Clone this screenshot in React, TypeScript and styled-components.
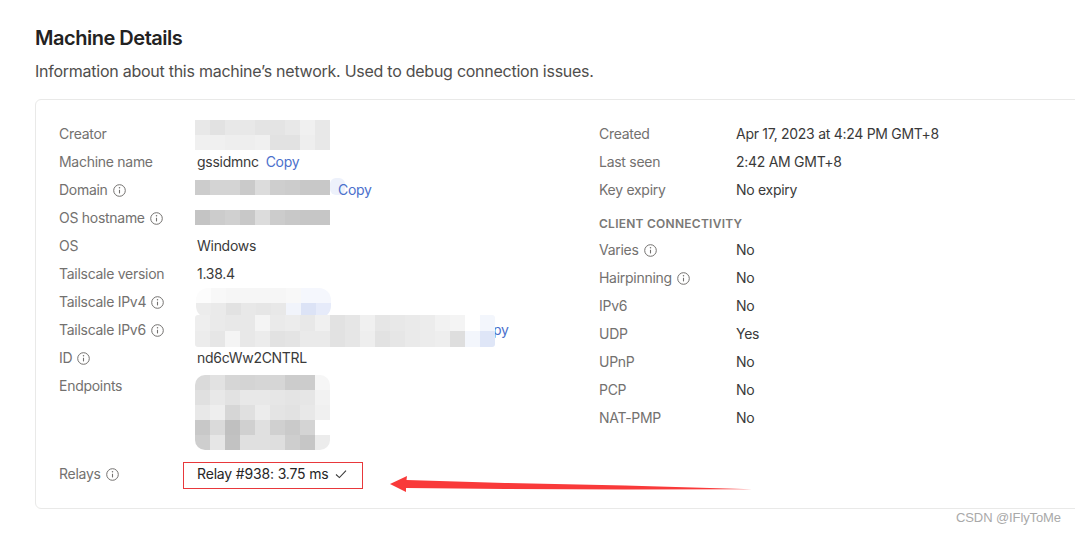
import React from 'react'
import styled, { createGlobalStyle } from 'styled-components'

const GlobalStyle = createGlobalStyle`
  html, body {
    margin: 0;
    padding: 0;
    background: #fff;
    overflow: hidden;
    height: 534px;
  }
`

const Page = styled.div`
  position: relative;
  width: 1075px;
  height: 534px;
  overflow: hidden;
  padding: 24px 0 0 35px;
  box-sizing: border-box;
  font-family: Inter, 'Liberation Sans', sans-serif;
  color: #3a3a3a;
`

const Title = styled.h2`
  margin: 0;
  font-size: 20px;
  line-height: 28px;
  font-weight: 600;
  letter-spacing: -0.024em;
  color: #232222;
`

const Description = styled.p`
  margin: 7px 0 16px;
  font-size: 16px;
  line-height: 24px;
  letter-spacing: -0.016em;
  color: #4f4e4c;
`

const Card = styled.div`
  width: 1100px;
  height: 410px;
  box-sizing: border-box;
  padding: 20px 23px;
  border: 1px solid #e9e9e8;
  border-radius: 6px;
  display: grid;
  grid-template-columns: 540px 1fr;
`

const Column = styled.div`
  display: flex;
  flex-direction: column;
`

const Row = styled.div<{ $labelWidth: number; $height?: number }>`
  display: grid;
  grid-template-columns: ${({ $labelWidth }) => $labelWidth}px 1fr;
  height: ${({ $height }) => $height ?? 28}px;
  font-size: 14px;
  line-height: 28px;
  letter-spacing: -0.02em;
`

const Label = styled.div`
  display: flex;
  align-items: center;
  gap: 5px;
  height: 28px;
  color: #73716f;
`

const Value = styled.div`
  position: relative;
  white-space: nowrap;
  color: #3a3a3a;
`

const CopyLink = styled.a<{ $offset?: number }>`
  position: relative;
  margin-left: ${({ $offset }) => $offset ?? 7}px;
  color: #4b70cc;
`

const SectionTitle = styled.div`
  height: 32px;
  padding-top: 6px;
  box-sizing: border-box;
  display: flex;
  align-items: center;
  font-size: 12px;
  font-weight: 600;
  letter-spacing: 0.25px;
  color: #7a7876;
`

const RelayBox = styled.span`
  position: absolute;
  left: -14px;
  top: 2px;
  width: 178px;
  height: 25px;
  border: 1px solid #e8383b;
  pointer-events: none;
`

const Relay = styled.span`
  display: inline-flex;
  align-items: center;
  gap: 5px;
  letter-spacing: -0.012em;
  color: #262626;
`

const MosaicSvg = styled.svg<{ $left: number; $top: number }>`
  position: absolute;
  left: ${({ $left }) => $left}px;
  top: ${({ $top }) => $top}px;
`

const ArrowSvg = styled.svg`
  position: absolute;
  left: 385px;
  top: 470px;
`

const Watermark = styled.div`
  position: absolute;
  left: 956px;
  top: 510px;
  font-family: 'Liberation Sans', Arial, sans-serif;
  font-size: 13px;
  line-height: 16px;
  letter-spacing: -0.1px;
  color: #a9a9a9;
`

function InfoIcon() {
  return (
    <svg width="13" height="13" viewBox="0 0 13 13" fill="none" stroke="#73716f">
      <circle cx="6.5" cy="6.5" r="5.8" strokeWidth="1" />
      <path d="M6.5 5.8V9.4" strokeWidth="1.1" />
      <circle cx="6.5" cy="3.8" r="0.75" fill="#73716f" stroke="none" />
    </svg>
  )
}

// blurred-out values: rows of 15px blocks, grey level per block (or a full colour string)
type Cell = number | string

function Mosaic({ left, top, rows, radius = 0, cellHeight = 15 }: { left: number; top: number; rows: Cell[][]; radius?: number; cellHeight?: number }) {
  const cols = Math.max(...rows.map(r => r.length))
  const id = `m${left}${top}${rows.length}${cols}`
  return (
    <MosaicSvg $left={left} $top={top} width={cols * 15} height={rows.length * cellHeight}>
      <defs>
        <clipPath id={id}>
          <rect width={cols * 15} height={rows.length * cellHeight} rx={radius} />
        </clipPath>
      </defs>
      <g clipPath={`url(#${id})`}>
        {rows.map((row, y) =>
          row.map((c, x) => (
            <rect
              key={`${x}-${y}`}
              x={x * 15}
              y={y * cellHeight}
              width="15"
              height={cellHeight}
              fill={typeof c === 'number' ? `rgb(${c},${c},${c})` : c}
            />
          )),
        )}
      </g>
    </MosaicSvg>
  )
}

const CREATOR = [
  [232, 226, 232, 232, 228, 228, 232, 240, 232],
  [240, 240, 238, 238, 240, 226, 226, 238, 232],
]
const DOMAIN = [[204, 212, 212, 202, 220, 206, 204, 200, 200]]
const DOMAIN_TAIL = [['#edf1fb' as Cell]]
const HOSTNAME = [[196, 204, 208, 200, 220, 204, 200, 198, 198]]
const IPV4 = [
  [252, 248, 246, 246, 246, 246, 248, '#f5f7fd', '#f5f7fd'],
  [236, 234, 226, 232, 230, 232, '#f1f4fb', '#dce3f6', '#e6ebfa'],
]
const IPV6 = [
  [238, 234, 232, 232, 244, 234, 236, 232, 240, 226, 230, 240, 230, 232, 234, 236, 242, 244, 255, '#f3f6fc'],
  [236, 230, 244, 232, 236, 226, 228, 234, 234, 226, 230, 238, 226, 230, 234, 236, 238, 222, '#f3f6fc', '#dfe6f7'],
]
const ENDPOINTS = [
  [218, 226, 214, 212, 214, 214, 204, 204, 246],
  [224, 232, 226, 232, 232, 230, 228, 230, 242],
  [232, 238, 214, 224, 236, 228, 226, 232, 240],
  [200, 218, 192, 208, 224, 208, 202, 212, 255],
  [206, 230, 194, 224, 224, 222, 206, 198, 236],
]

const LEFT_ROWS: { label: string; info?: boolean; value?: string; copy?: boolean }[] = [
  { label: 'Creator' },
  { label: 'Machine name', value: 'gssidmnc', copy: true },
  { label: 'Domain', info: true },
  { label: 'OS hostname', info: true },
  { label: 'OS', value: 'Windows' },
  { label: 'Tailscale version', value: '1.38.4' },
  { label: 'Tailscale IPv4', info: true },
  { label: 'Tailscale IPv6', info: true },
  { label: 'ID', info: true, value: 'nd6cWw2CNTRL' },
]

const RIGHT_TOP = [
  { label: 'Created', value: 'Apr 17, 2023 at 4:24 PM GMT+8' },
  { label: 'Last seen', value: '2:42 AM GMT+8' },
  { label: 'Key expiry', value: 'No expiry' },
]

const RIGHT_BOTTOM = [
  { label: 'Varies', info: true, value: 'No' },
  { label: 'Hairpinning', info: true, value: 'No' },
  { label: 'IPv6', value: 'No' },
  { label: 'UDP', value: 'Yes' },
  { label: 'UPnP', value: 'No' },
  { label: 'PCP', value: 'No' },
  { label: 'NAT-PMP', value: 'No' },
]

function renderCover(label: string) {
  switch (label) {
    case 'Creator':
      return <Mosaic left={-2} top={0} rows={CREATOR} />
    case 'Domain':
      return (
        <>
          <Mosaic left={133} top={2} rows={DOMAIN_TAIL} cellHeight={17} radius={6} />
          <Mosaic left={-2} top={4} rows={DOMAIN} />
          <CopyLink $offset={141}>Copy</CopyLink>
        </>
      )
    case 'OS hostname':
      return <Mosaic left={-2} top={6} rows={HOSTNAME} />
    case 'Tailscale IPv4':
      return <Mosaic left={-1} top={0} rows={IPV4} radius={12} />
    case 'Tailscale IPv6':
      return (
        <>
          <CopyLink $offset={278}>Copy</CopyLink>
          <Mosaic left={-2} top={-1} rows={IPV6} radius={3} cellHeight={16} />
        </>
      )
    default:
      return null
  }
}

export default function App() {
  return (
    <Page>
      <GlobalStyle />
      <Title>Machine Details</Title>
      <Description>Information about this machine’s network. Used to debug connection issues.</Description>
      <Card>
        <Column>
          {LEFT_ROWS.map(row => (
            <Row key={row.label} $labelWidth={138}>
              <Label>
                {row.label}
                {row.info && <InfoIcon />}
              </Label>
              <Value>
                {row.value}
                {row.copy && <CopyLink>Copy</CopyLink>}
                {renderCover(row.label)}
              </Value>
            </Row>
          ))}
          <Row $labelWidth={138} $height={88}>
            <Label>Endpoints</Label>
            <Value>
              <Mosaic left={-2} top={3} rows={ENDPOINTS} radius={10} />
            </Value>
          </Row>
          <Row $labelWidth={138}>
            <Label>
              Relays
              <InfoIcon />
            </Label>
            <Value>
              <Relay>
                Relay #938: 3.75 ms
                <svg width="14" height="14" viewBox="0 0 14 14" fill="none" stroke="#3a3a3a" strokeWidth="1.1">
                  <path d="M2 7.5L5.4 10.6L12 3.6" />
                </svg>
              </Relay>
              <RelayBox />
            </Value>
          </Row>
        </Column>
        <Column>
          {RIGHT_TOP.map(row => (
            <Row key={row.label} $labelWidth={137}>
              <Label>{row.label}</Label>
              <Value>{row.value}</Value>
            </Row>
          ))}
          <SectionTitle>CLIENT CONNECTIVITY</SectionTitle>
          {RIGHT_BOTTOM.map(row => (
            <Row key={row.label} $labelWidth={137}>
              <Label>
                {row.label}
                {row.info && <InfoIcon />}
              </Label>
              <Value>{row.value}</Value>
            </Row>
          ))}
        </Column>
      </Card>
      <ArrowSvg width="372" height="26" viewBox="0 0 372 26">
        <polygon points="5,14 22,6 21.5,10 120,13 240,15.5 367,19.3 240,19.5 120,19 21,18 21,22" fill="#f93a3a" />
      </ArrowSvg>
      <Watermark>CSDN @IFlyToMe</Watermark>
    </Page>
  )
}
